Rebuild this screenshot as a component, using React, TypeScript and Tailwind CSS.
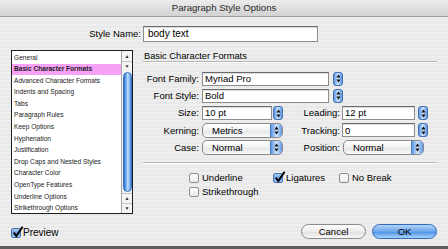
import React from "react";

const ITEMS = [
  "General",
  "Basic Character Formats",
  "Advanced Character Formats",
  "Indents and Spacing",
  "Tabs",
  "Paragraph Rules",
  "Keep Options",
  "Hyphenation",
  "Justification",
  "Drop Caps and Nested Styles",
  "Character Color",
  "OpenType Features",
  "Underline Options",
  "Strikethrough Options",
];

function Arrows() {
  return (
    <svg width="5" height="9" viewBox="0 0 5 9">
      <path d="M2.5 0.5L4.6 3.4H0.4Z M0.4 5.6H4.6L2.5 8.5Z" fill="#111" />
    </svg>
  );
}

function Spinner({ ml = "ml-[3px]" }: { ml?: string }) {
  return (
    <div
      className={`${ml} flex h-[14px] w-[10px] items-center justify-center rounded-[3px] border border-[#3d6fb5] bg-[linear-gradient(90deg,#5d95e3,#cfe5fb_50%,#5d95e3)]`}
    >
      <Arrows />
    </div>
  );
}

function TextBox({ w, value }: { w: string; value: string }) {
  return (
    <div
      className={`${w} flex h-[14px] items-center border border-[#8e8e8e] border-t-[#6a6a6a] bg-white pl-[2px] text-[9.5px] leading-none text-black shadow-[inset_0_1px_1px_rgba(0,0,0,0.15)]`}
    >
      {value}
    </div>
  );
}

function Popup({ value }: { value: string }) {
  return (
    <div className="flex h-[15px] w-[81px] items-center overflow-hidden rounded-[5px] border border-[#8a8a8a] bg-[linear-gradient(to_bottom,#ffffff,#f0f0f0_50%,#e4e4e4_51%,#fafafa)]">
      <span className="flex-1 pl-[9px] text-[9.5px] leading-none text-black">{value}</span>
      <div className="flex h-full w-[12px] items-center justify-center border-l border-[#4a7cc0] bg-[linear-gradient(90deg,#5d95e3,#cfe5fb_50%,#5d95e3)]">
        <Arrows />
      </div>
    </div>
  );
}

function Check({ checked = false }: { checked?: boolean }) {
  return (
    <div
      className={`relative h-[10px] w-[10px] shrink-0 rounded-[2px] border ${
        checked
          ? "border-[#4a74b0] bg-[linear-gradient(to_bottom,#a9cbf2,#6fa3e6_50%,#9ccaf7)]"
          : "border-[#8f8f8f] bg-[linear-gradient(to_bottom,#ffffff,#e9e9e9)]"
      }`}
    >
      {checked && (
        <svg className="absolute -top-[3px] left-[0px]" width="12" height="12" viewBox="0 0 12 12">
          <path d="M1.8 6.6L4.3 10L10.6 0.8" stroke="#000" strokeWidth="2" fill="none" />
        </svg>
      )}
    </div>
  );
}

function Row({ label, children }: { label: string; children: React.ReactNode }) {
  return (
    <div className="flex h-[15px] items-center">
      <span className="w-[56px] text-right text-[9.5px] leading-none text-black">{label}</span>
      <div className="ml-[3px] flex items-center">{children}</div>
    </div>
  );
}

function SubLabel({ label }: { label: string }) {
  return <span className="w-[57px] text-right text-[9.5px] leading-none text-black">{label}</span>;
}

export default function App() {
  return (
    <div className="flex h-[249px] w-[448px] flex-col overflow-hidden bg-[repeating-linear-gradient(to_bottom,#eeeeee_0px,#eeeeee_2px,#e9e9e9_2px,#e9e9e9_4px)] font-['Liberation_Sans',Arial,sans-serif] text-black">
      {/* title bar */}
      <div className="flex h-[17px] items-center justify-center border-b border-[#9a9a9a] bg-[linear-gradient(to_bottom,#ececec,#d2d2d2)] text-[9.6px] leading-none text-[#2a2a2a]">
        Paragraph Style Options
      </div>

      {/* style name */}
      <div className="mt-[9px] flex h-[15px] items-center">
        <span className="w-[141px] text-right text-[9.5px] leading-none">Style Name:</span>
        <div className="ml-[2px] flex h-[16px] w-[175px] items-center border border-[#8e8e8e] border-t-[#6a6a6a] bg-white pl-[4px] text-[10px] leading-none shadow-[inset_0_1px_1px_rgba(0,0,0,0.15)]">
          body text
        </div>
      </div>

      <div className="mt-[9px] flex">
        {/* category list */}
        <div className="ml-[11px] flex h-[164px] w-[122px] border border-[#1e1e1e] bg-white">
          <div className="flex-1 pt-[1px]">
            {ITEMS.map((it, i) => (
              <div
                key={it}
                className={`flex h-[11.6px] items-center pl-[2px] text-[6.6px] leading-none ${
                  i === 1 ? "bg-[#f6a2f6] font-bold text-[#1a1a1a]" : "text-[#222]"
                }`}
              >
                {it}
              </div>
            ))}
          </div>
          <div className="flex w-[11px] flex-col border-l border-[#a6a6a6] bg-[#f4f4f4]">
            <div className="flex h-[10px] items-center justify-center text-[5px] leading-none text-[#333]">▲</div>
            <div className="flex h-[10px] items-center justify-center border-t border-[#c4c4c4] text-[5px] leading-none text-[#333]">▼</div>
            <div className="flex flex-1 px-[0.5px] py-[1px]">
              <div className="flex-1 rounded-full border border-[#356cc0] bg-[linear-gradient(90deg,#2f6ed0,#8ec2f5_40%,#c2e1fc_55%,#4a8ae0)]" />
            </div>
            <div className="flex h-[10px] items-center justify-center border-t border-[#c4c4c4] text-[5px] leading-none text-[#333]">▲</div>
            <div className="flex h-[10px] items-center justify-center border-t border-[#c4c4c4] text-[5px] leading-none text-[#333]">▼</div>
          </div>
        </div>

        {/* right panel */}
        <div className="ml-[10px] flex w-[294px] flex-col">
          <div className="h-[12px] border-b border-[#b4b4b4] pl-[1px] text-[9.3px] leading-[12px]">
            Basic Character Formats
          </div>
          <div className="h-[1px] bg-white" />

          <div className="mt-[8px] flex flex-col gap-[2.25px]">
            <Row label="Font Family:">
              <TextBox w="w-[127px]" value="Myriad Pro" />
              <Spinner ml="ml-[4px]" />
            </Row>
            <Row label="Font Style:">
              <TextBox w="w-[127px]" value="Bold" />
              <Spinner ml="ml-[4px]" />
            </Row>
            <Row label="Size:">
              <TextBox w="w-[70px]" value="10 pt" />
              <Spinner ml="ml-[1px]" />
              <SubLabel label="Leading:" />
              <div className="ml-[2px]">
                <TextBox w="w-[73px]" value="12 pt" />
              </div>
              <Spinner />
            </Row>
            <Row label="Kerning:">
              <Popup value="Metrics" />
              <SubLabel label="Tracking:" />
              <div className="ml-[2px]">
                <TextBox w="w-[73px]" value="0" />
              </div>
              <Spinner />
            </Row>
            <Row label="Case:">
              <Popup value="Normal" />
              <SubLabel label="Position:" />
              <div className="ml-[3px]">
                <Popup value="Normal" />
              </div>
            </Row>
          </div>

          <div className="mt-[7px] h-[1px] bg-[#b4b4b4]" />
          <div className="h-[1px] bg-white" />

          <div className="ml-[46px] mt-[9px] grid grid-cols-[84px_66px_auto] gap-y-[4px] text-[9.5px] leading-none">
            <label className="flex h-[10px] items-center gap-[3px]">
              <Check />
              Underline
            </label>
            <label className="flex h-[10px] items-center gap-[3px]">
              <Check checked />
              Ligatures
            </label>
            <label className="flex h-[10px] items-center gap-[3px]">
              <Check />
              No Break
            </label>
            <label className="flex h-[10px] items-center gap-[3px]">
              <Check />
              Strikethrough
            </label>
          </div>
        </div>
      </div>

      {/* bottom row */}
      <div className="mt-[10px] flex h-[15px] items-center">
        <label className="ml-[11px] mt-[3px] flex items-center gap-[2px] text-[10px] leading-none">
          <Check checked />
          Preview
        </label>
        <div className="ml-auto mr-[11px] flex gap-[6px]">
          <button className="flex h-[15px] w-[65px] items-center justify-center rounded-full border border-[#8a8a8a] bg-[linear-gradient(to_bottom,#fdfdfd,#ececec_50%,#dedede_51%,#f7f7f7)] text-[9.5px] leading-none text-black">
            Cancel
          </button>
          <button className="flex h-[15px] w-[65px] items-center justify-center rounded-full border border-[#3468b8] bg-[linear-gradient(to_bottom,#b3d4f7,#6aa5ec_50%,#4b8ee6_51%,#a6d4fc)] text-[9.5px] leading-none text-black">
            OK
          </button>
        </div>
      </div>

      <div className="flex-1" />
      <div className="h-[3px] bg-[#5e5e5e]" />
    </div>
  );
}
